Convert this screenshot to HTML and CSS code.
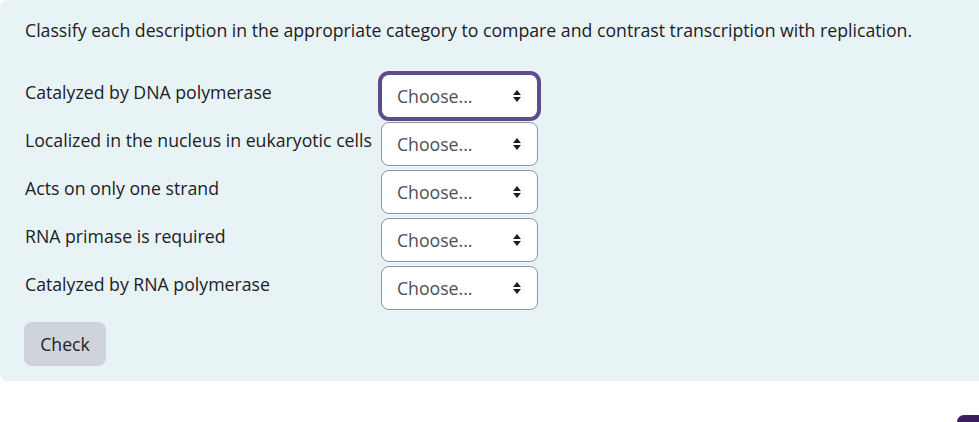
FILE: index.html
```html
<!DOCTYPE html>
<html>
<head>
<meta charset="utf-8">
<link rel="stylesheet" href="styles.css">
</head>
<body>
<div class="que">
  <p class="qtext">Classify each description in the appropriate category to compare and contrast transcription with replication.</p>
  <table class="answer">
    <tr><td class="text">Catalyzed by DNA polymerase</td><td class="control"><div class="select focused"><span>Choose...</span><svg class="arrows" viewBox="0 0 8 14"><path d="M4 1 L8 6 H0 Z M4 13 L8 8 H0 Z"/></svg></div></td></tr>
    <tr><td class="text">Localized in the nucleus in eukaryotic cells</td><td class="control"><div class="select"><span>Choose...</span><svg class="arrows" viewBox="0 0 8 14"><path d="M4 1 L8 6 H0 Z M4 13 L8 8 H0 Z"/></svg></div></td></tr>
    <tr><td class="text">Acts on only one strand</td><td class="control"><div class="select"><span>Choose...</span><svg class="arrows" viewBox="0 0 8 14"><path d="M4 1 L8 6 H0 Z M4 13 L8 8 H0 Z"/></svg></div></td></tr>
    <tr><td class="text">RNA primase is required</td><td class="control"><div class="select"><span>Choose...</span><svg class="arrows" viewBox="0 0 8 14"><path d="M4 1 L8 6 H0 Z M4 13 L8 8 H0 Z"/></svg></div></td></tr>
    <tr><td class="text">Catalyzed by RNA polymerase</td><td class="control"><div class="select"><span>Choose...</span><svg class="arrows" viewBox="0 0 8 14"><path d="M4 1 L8 6 H0 Z M4 13 L8 8 H0 Z"/></svg></div></td></tr>
  </table>
  <button class="check">Check</button>
</div>
<div class="corner-btn"></div>
</body>
</html>
```
FILE: styles.css
```css
html, body {
  margin: 0;
  padding: 0;
  overflow: hidden;
  height: 422px;
  background: #fff;
}
body {
  font-family: "Open Sans", "Noto Sans", sans-serif;
  font-size: 17.7px;
  line-height: 1.5;
  color: #1d2125;
  position: relative;
}
.que {
  background: #e7f3f5;
  border-radius: 8px;
  width: 1000px;
  box-sizing: border-box;
  padding: 17px 25px 15px 25px;
  height: 381px;
}
.qtext {
  margin: 0 0 28.5px 0;
  white-space: nowrap;
}
.answer {
  border-collapse: collapse;
  margin-bottom: 10px;
}
.answer td {
  padding: 2px 0;
  vertical-align: top;
}
.answer td.text {
  padding-top: 7px;
  padding-right: 9px;
  white-space: nowrap;
}
.select {
  box-sizing: border-box;
  width: 157px;
  height: 44px;
  border: 1px solid #8f959e;
  border-radius: 8px;
  background: #fff;
  display: flex;
  align-items: center;
  justify-content: space-between;
  padding: 0 16px 0 15px;
  color: #495057;
}
.select.focused {
  box-shadow: 0 0 0 3px #5f4b8b;
  border-color: #5f4b8b;
}
.arrows {
  width: 8px;
  height: 14px;
  fill: #1d2125;
}
.check {
  font-family: inherit;
  font-size: 17.7px;
  line-height: 1.5;
  color: #1d2125;
  background: #ced4da;
  border: none;
  border-radius: 8px;
  width: 82px;
  height: 44px;
  margin-left: -1px;
  padding: 0;
  display: block;
}
.corner-btn {
  position: absolute;
  left: 957px;
  top: 415px;
  width: 22px;
  height: 7px;
  background: #3a1f5c;
  border-top-left-radius: 8px;
}
```
